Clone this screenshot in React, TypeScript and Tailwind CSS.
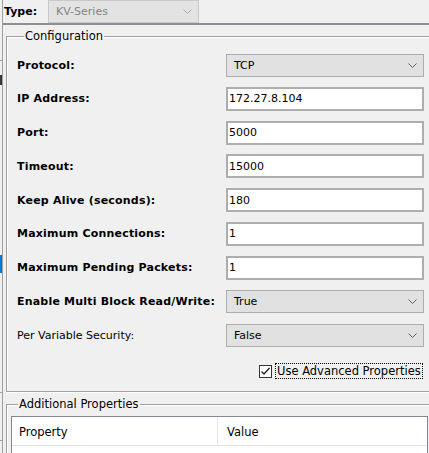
import React from "react";

type Field = {
  label: string;
  kind: "combo" | "text";
  value: string;
  bold?: boolean;
};

const fields: Field[] = [
  { label: "Protocol:", kind: "combo", value: "TCP", bold: true },
  { label: "IP Address:", kind: "text", value: "172.27.8.104", bold: true },
  { label: "Port:", kind: "text", value: "5000", bold: true },
  { label: "Timeout:", kind: "text", value: "15000", bold: true },
  { label: "Keep Alive (seconds):", kind: "text", value: "180", bold: true },
  { label: "Maximum Connections:", kind: "text", value: "1", bold: true },
  { label: "Maximum Pending Packets:", kind: "text", value: "1", bold: true },
  { label: "Enable Multi Block Read/Write:", kind: "combo", value: "True", bold: true },
  { label: "Per Variable Security:", kind: "combo", value: "False" },
];

const Chevron = ({ color = "#5f5f5f" }: { color?: string }) => (
  <svg width="9" height="5" viewBox="0 0 9 5">
    <path d="M0.5 0.5 L4.5 4.5 L8.5 0.5" fill="none" stroke={color} strokeWidth="1" />
  </svg>
);

const ComboBox = ({ value, disabled = false }: { value: string; disabled?: boolean }) => (
  <div
    className={`flex items-center justify-between h-[23px] border pl-[7px] pr-[6px] ${
      disabled ? "bg-[#e3e3e3] border-[#c9c9c9] text-[#838383]" : "bg-[#e1e1e1] border-[#adadad] text-black"
    }`}
  >
    <span>{value}</span>
    <Chevron color={disabled ? "#a8a8a8" : "#5f5f5f"} />
  </div>
);

const TextBox = ({ value }: { value: string }) => (
  <div className="flex items-center h-[24px] bg-white border-2 border-[#aeaeae] pl-[1px] text-black">
    {value}
  </div>
);

const FieldRow = ({ field }: { field: Field }) => (
  <div className="flex items-center h-[24px]">
    <div className={`w-[209px] ${field.bold ? "font-bold tracking-[0.2px]" : ""}`}>{field.label}</div>
    <div className="w-[198px]">
      {field.kind === "combo" ? <ComboBox value={field.value} /> : <TextBox value={field.value} />}
    </div>
  </div>
);

export default function App() {
  return (
    <div
      className="w-[429px] h-[453px] overflow-hidden bg-[#f0f0f0] flex text-[11px] leading-[13px] text-black"
      style={{ fontFamily: '"DejaVu Sans", Tahoma, sans-serif' }}
    >
      {/* strip of the neighbouring pane */}
      <div className="w-[2px] shrink-0 flex flex-col">
        <div className="h-[60px]" />
        <div className="h-px bg-[#a0a0a0]" />
        <div className="h-[14px]" />
        <div className="h-[10px] w-[2px] border-r-2 border-[#3b3b3b]" />
        <div className="h-[170px]" />
        <div className="h-[18px] bg-[#0078d7]" />
        <div className="h-[119px]" />
        <div className="h-px bg-[#a0a0a0]" />
        <div className="h-[47px]" />
        <div className="h-px bg-[#a0a0a0]" />
      </div>

      <div className="flex-1 flex flex-col border-l border-[#a0a0a0]">
        {/* device type */}
        <div className="h-[28px] flex items-start">
          <div className="font-bold w-[45px] pl-[1px] pt-[5px]">Type:</div>
          <div className="w-[151px]">
            <ComboBox value="KV-Series" disabled />
          </div>
        </div>

        <div className="flex-1 border-t-2 border-[#8c9095] pl-[3px]">
          <fieldset className="mt-[5px] w-[440px] border border-[#a0a0a0] shadow-[inset_1px_1px_0_#fff,1px_1px_0_#fff] pl-[10px] pt-[11px] pb-[12px]">
            <legend className="ml-[7px] px-[1px] leading-[12px] text-[11.5px]">Configuration</legend>
            <div className="flex flex-col gap-[9.75px]">
              {fields.map((f) => (
                <FieldRow key={f.label} field={f} />
              ))}
            </div>
            <div className="flex items-center h-[16px] mt-[16px] pl-[242px]">
              <div className="w-[13px] h-[13px] border border-[#333] bg-white flex items-center justify-center">
                <svg width="11" height="11" viewBox="0 0 11 11">
                  <path d="M1.5 5.5 L4 8 L9.5 2" fill="none" stroke="#222" strokeWidth="1.3" />
                </svg>
              </div>
              <div className="ml-[3px] px-[1px] h-[16px] flex items-center border border-dotted border-black text-[11.5px]">
                Use Advanced Properties
              </div>
            </div>
          </fieldset>

          <fieldset className="mt-[6px] w-[440px] h-[80px] border border-[#a0a0a0] shadow-[inset_1px_1px_0_#fff] pl-[4px] pt-[6px]">
            <legend className="ml-[7px] px-[1px] leading-[12px] text-[11.5px]">Additional Properties</legend>
            <div className="w-[417px] h-[60px] bg-white border border-[#828790]">
              <div className="flex h-[29px] border-b border-[#e5e5e5] text-[11.5px]">
                <div className="w-[206px] border-r border-[#e5e5e5] pl-[7px] pt-[9px]">Property</div>
                <div className="flex-1 pl-[9px] pt-[9px]">Value</div>
              </div>
            </div>
          </fieldset>
        </div>
      </div>
    </div>
  );
}
